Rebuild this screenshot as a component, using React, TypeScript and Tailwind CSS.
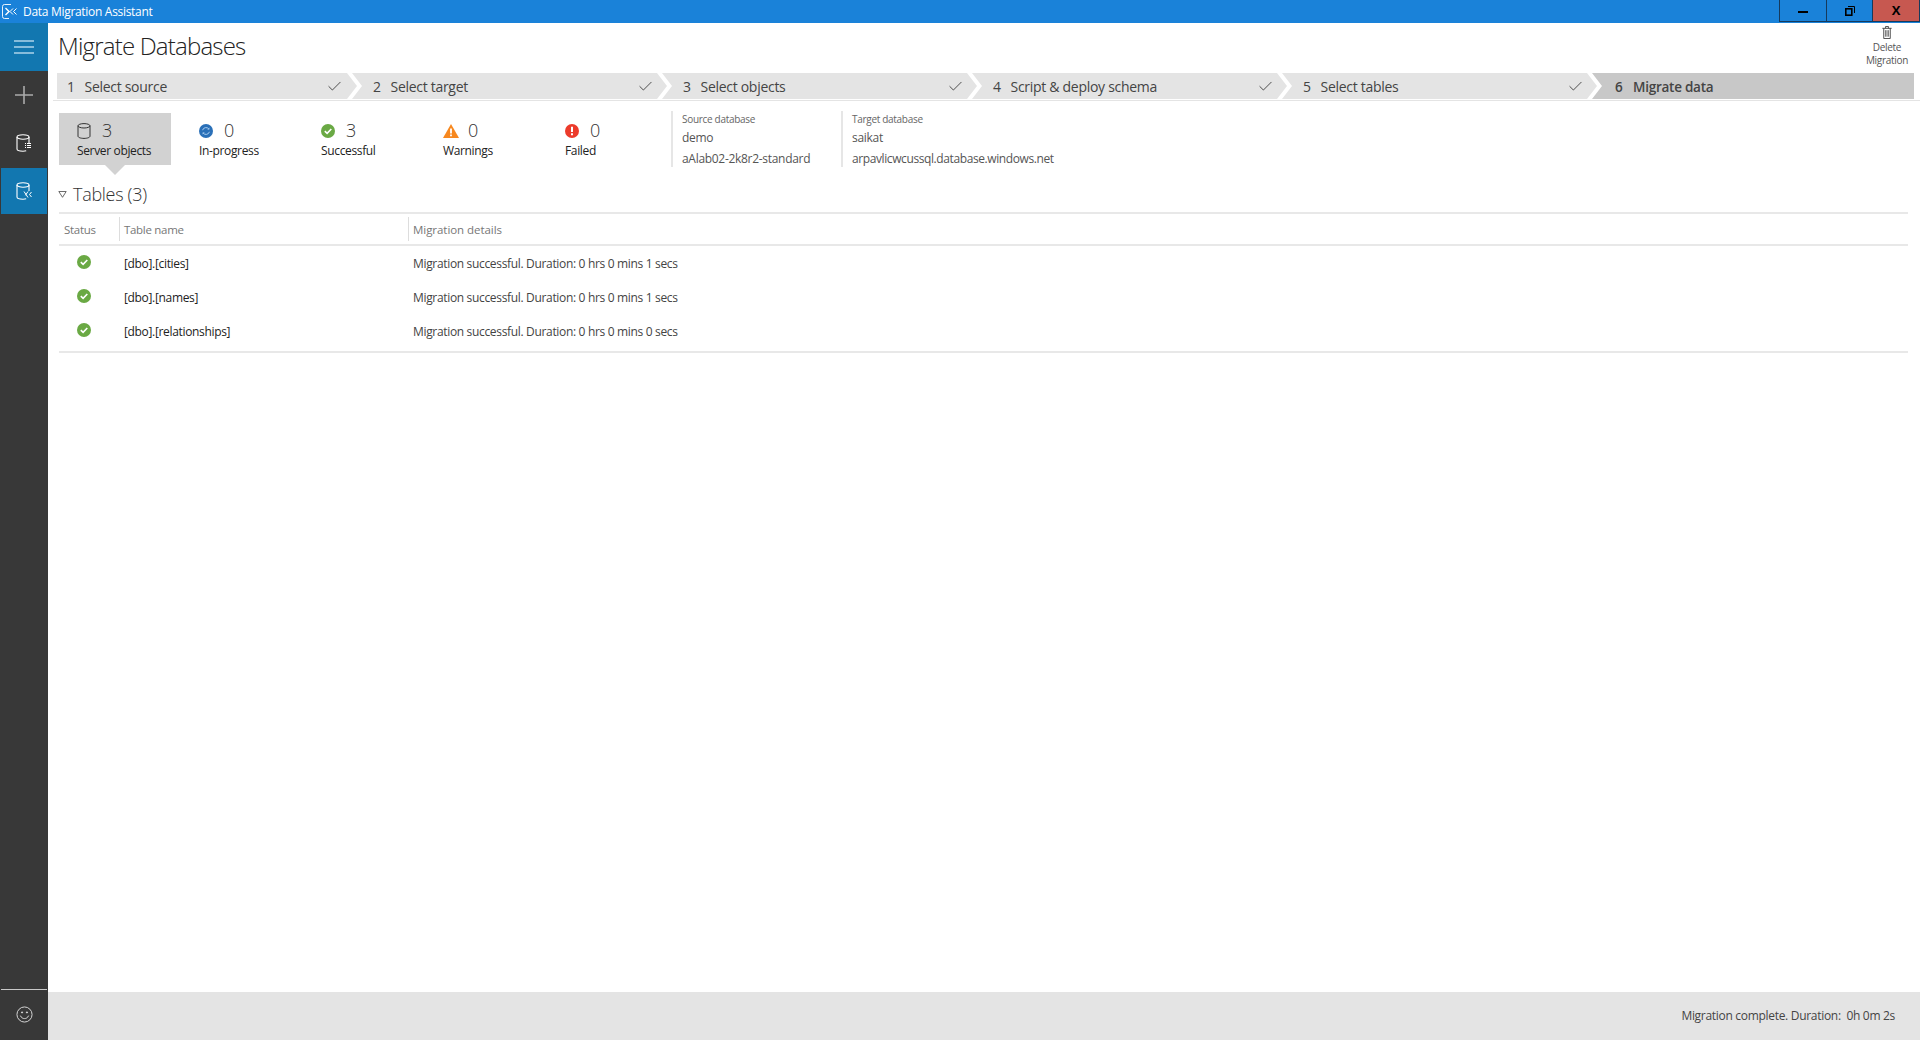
// Data Migration Assistant, "Migrate data" results screen.
import { Check } from 'lucide-react';

const FONT = "font-['Open_Sans','Liberation_Sans',sans-serif]";

const steps = ['Select source', 'Select target', 'Select objects', 'Script & deploy schema', 'Select tables'];

const rows = [
  { name: '[dbo].[cities]', secs: 1 },
  { name: '[dbo].[names]', secs: 1 },
  { name: '[dbo].[relationships]', secs: 0 },
];

function Cylinder({ className = '', children }: { className?: string; children?: React.ReactNode }) {
  return (
    <svg viewBox="0 0 16 18" fill="none" stroke="currentColor" strokeWidth="1.1" className={className}>
      <ellipse cx="7" cy="3" rx="6" ry="2.2" />
      <path d="M1 3v12c0 1.2 2.7 2.2 6 2.2 1.2 0 2.3-.1 3.2-.4M13 3v6" />
      {children}
    </svg>
  );
}

function ServerIcon() {
  return (
    <svg viewBox="0 0 14 16" fill="none" stroke="#333" strokeWidth="1" className="h-[16px] w-[14px]">
      <ellipse cx="7" cy="2.8" rx="6" ry="2.2" />
      <path d="M1 2.8v10.4c0 1.2 2.7 2.2 6 2.2s6-1 6-2.2V2.8" />
    </svg>
  );
}

function SuccessIcon({ className = '' }: { className?: string }) {
  return (
    <svg viewBox="0 0 14 14" className={className}>
      <circle cx="7" cy="7" r="7" fill="#6aa944" />
      <path d="M3.8 7.2 6.1 9.4 10.3 5" fill="none" stroke="#fff" strokeWidth="1.6" />
    </svg>
  );
}

function ProgressIcon() {
  return (
    <svg viewBox="0 0 14 14" className="h-[14px] w-[14px]">
      <circle cx="7" cy="7" r="7" fill="#2a70b8" />
      <path d="M3.6 6.2A3.5 3.5 0 0 1 9.8 5M10.4 7.8A3.5 3.5 0 0 1 4.2 9" fill="none" stroke="#a9cdf0" strokeWidth="1" />
      <path d="M10.4 3.4v2.2H8.2M3.6 10.6V8.4h2.2" fill="#a9cdf0" />
    </svg>
  );
}

function WarningIcon() {
  return (
    <svg viewBox="0 0 16 14" className="h-[14px] w-[16px]">
      <path d="M8 0 16 14H0Z" fill="#f7881f" />
      <path d="M7.1 4.5h1.8v5H7.1zM7.1 10.5h1.8v1.8H7.1z" fill="#fff" />
    </svg>
  );
}

function FailedIcon() {
  return (
    <svg viewBox="0 0 14 14" className="h-[14px] w-[14px]">
      <circle cx="7" cy="7" r="7" fill="#ec3b2b" />
      <path d="M6 2.8h2v5.2H6zM6 9.2h2v2H6z" fill="#fff" />
    </svg>
  );
}

function Stat({ icon, count, label, active }: { icon: React.ReactNode; count: number; label: string; active?: boolean }) {
  return (
    <div className={`relative h-[52px] w-[112px] pl-[18px] pt-[8px] ${active ? 'bg-[#d2d2d2]' : ''}`}>
      <div className="flex h-[19px] items-center">
        <div className="flex w-[25px] items-center">{icon}</div>
        <span className="text-[18px] font-light leading-[19px] text-[#333]">{count}</span>
      </div>
      <div className="mt-[3px] text-[12px] leading-[16px] tracking-[-0.35px] text-[#222]">{label}</div>
      {active && (
        <div className="absolute left-[46px] top-[52px] h-0 w-0 border-x-[10px] border-t-[10px] border-x-transparent border-t-[#d2d2d2]" />
      )}
    </div>
  );
}

function DbInfo({ title, name, server, className, serverClass }: { title: string; name: string; server: string; className: string; serverClass: string }) {
  return (
    <div className={`h-[56px] border-l-2 border-[#e6e6e6] pl-[9px] ${className}`}>
      <div className="mt-[1px] text-[10px] leading-[14px] tracking-[-0.3px] text-[#666]">{title}</div>
      <div className="mt-[4px] text-[12px] leading-[16px] tracking-[-0.3px] text-[#555]">{name}</div>
      <div className={`mt-[5px] text-[12px] leading-[16px] text-[#555] ${serverClass}`}>{server}</div>
    </div>
  );
}

export default function App() {
  return (
    <div className={`flex h-screen w-full flex-col overflow-hidden bg-white ${FONT}`}>
      {/* title bar */}
      <div className="flex h-[23px] shrink-0 items-start justify-between bg-[#1a82d9]">
        <div className="flex h-[23px] items-center pl-[1px] text-white">
          <svg viewBox="0 0 17 17" fill="none" stroke="#fff" className="h-[17px] w-[17px]">
            <path d="M10 1.5H3.5a2 2 0 0 0-2 2v10a2 2 0 0 0 2 2H8" strokeWidth=".9" />
            <path d="M4.5 5 8 8.5 4.5 12" strokeWidth="1.4" />
            <path d="M12 5.5 9 8.5l3 3M15.5 5.5l-3 3 3 3" strokeWidth="1" />
          </svg>
          <span className="ml-[5px] text-[12px] tracking-[-0.3px]">Data Migration Assistant</span>
        </div>
        <div className="flex h-[22px] border border-t-0 border-[#163a5c]">
          <div className="flex w-[46px] items-center justify-center pt-[3px]">
            <div className="h-[2px] w-[10px] bg-black" />
          </div>
          <div className="flex w-[46px] items-center justify-center border-l border-[#163a5c]">
            <svg viewBox="0 0 10 10" fill="none" stroke="#000" className="h-[10px] w-[10px]">
              <rect x="0.8" y="2.8" width="6" height="6.4" strokeWidth="1.6" />
              <path d="M3 .5h6.5V7" strokeWidth="1" />
            </svg>
          </div>
          <div className="flex w-[47px] items-center justify-center border-l border-[#163a5c] bg-[#c75850] text-[13px] font-bold text-black">
            X
          </div>
        </div>
      </div>

      <div className="flex min-h-0 flex-1">
        {/* side rail */}
        <div className="flex w-[48px] shrink-0 flex-col bg-[#383838] text-white">
          <div className="flex h-[48px] items-center justify-center bg-[#1277b0]">
            <div className="flex w-[20px] flex-col gap-[4px]">
              <div className="h-[2px] bg-[#86bcdb]" />
              <div className="h-[2px] bg-[#86bcdb]" />
              <div className="h-[2px] bg-[#86bcdb]" />
            </div>
          </div>
          <div className="flex h-[48px] items-center justify-center">
            <svg viewBox="0 0 20 20" stroke="#aaa" strokeWidth="1.6" className="h-[20px] w-[20px]">
              <path d="M10 1v18M1 10h18" />
            </svg>
          </div>
          <div className="flex h-[48px] items-center justify-center">
            <Cylinder className="h-[18px] w-[16px]">
              <path d="M9 9.5h1M9 11.5h1M9 13.5h1M11 9.5h4M11 11.5h4M11 13.5h4" strokeWidth="1" />
            </Cylinder>
          </div>
          <div className="mx-[1px] mt-[1px] flex h-[46px] items-center justify-center bg-[#1277b0]">
            <Cylinder className="h-[18px] w-[16px]">
              <path d="M8 9.5l4 6M12 9.5l-2.6 3.8M15.5 10l-2 2.5 2 2.5" strokeWidth="1" />
            </Cylinder>
          </div>
          <div className="mt-auto mx-[1px] h-[1px] bg-[#c8c8c8]" />
          <div className="flex h-[50px] items-center justify-center pb-[2px]">
            <svg viewBox="0 0 18 18" fill="none" stroke="#ddd" strokeWidth="1" className="h-[17px] w-[17px]">
              <circle cx="9" cy="9" r="8" />
              <path d="M4.6 10.2c1 2.2 2.6 3.1 4.4 3.1s3.4-.9 4.4-3.1" />
              <circle cx="6.4" cy="6.8" r=".6" fill="#ddd" />
              <circle cx="11.6" cy="6.8" r=".6" fill="#ddd" />
            </svg>
          </div>
        </div>

        {/* main */}
        <div className="flex min-w-0 flex-1 flex-col">
          <div className="flex h-[50px] shrink-0 items-start justify-between pl-[10px] pr-[8px]">
            <h1 className="mt-[8px] text-[24px] font-light leading-[30px] tracking-[-0.8px] text-[#222]">
              Migrate Databases
            </h1>
            <div className="flex w-[50px] flex-col items-center pt-[3px] text-center text-[10px] leading-[13px] tracking-[-0.3px] text-[#555]">
              <svg viewBox="0 0 10 14" fill="none" stroke="#444" className="h-[13px] w-[10px]">
                <path d="M1.5 2.5v11h7v-11M0 2.5h10M3.5 2.5V.5h3v2" strokeWidth="1" />
                <path d="M3.5 4.5v7M5 4.5v7M6.5 4.5v7" strokeWidth=".8" />
              </svg>
              <span className="mt-[2px]">Delete</span>
              <span>Migration</span>
            </div>
          </div>

          {/* wizard steps */}
          <div className="shrink-0 pl-[5px]">
            <div className="flex h-[26px] pl-[4px] pr-[6px]">
              {steps.map((label, i) => (
                <div
                  key={label}
                  className={
                    i === 0
                      ? 'flex w-[300px] shrink-0 items-center justify-between bg-[#e4e4e4] pl-[10px] pr-[14px] [clip-path:polygon(0_0,290px_0,300px_50%,290px_100%,0_100%)]'
                      : '-ml-[5px] flex w-[315px] shrink-0 items-center justify-between bg-[#e4e4e4] pl-[21px] pr-[13px] [clip-path:polygon(0_0,305px_0,315px_50%,305px_100%,0_100%,10px_50%)]'
                  }
                >
                  <div className="flex pt-[1px] text-[14px] tracking-[-0.29px] text-[#444]">
                    <span className="w-[17.5px]">{i + 1}</span>
                    <span>{label}</span>
                  </div>
                  <Check className="h-[17px] w-[17px] text-[#333]" strokeWidth={1.2} />
                </div>
              ))}
              <div className="-ml-[5px] flex min-w-0 flex-1 items-center bg-[#c8c8c8] pl-[23px] pt-[2px] text-[13.5px] font-semibold tracking-[-0.25px] text-[#444] [clip-path:polygon(0_0,100%_0,100%_100%,0_100%,10px_50%)]">
                <span className="w-[18px]">6</span>
                <span>Migrate data</span>
              </div>
            </div>
            <div className="mt-[1px] h-[1px] bg-[#e4e4e4]" />
          </div>

          {/* summary */}
          <div className="flex shrink-0 pl-[11px] pt-[10px]">
            <div className="mt-[2px] flex gap-[10px]">
              <Stat active count={3} label="Server objects" icon={<ServerIcon />} />
              <Stat count={0} label="In-progress" icon={<ProgressIcon />} />
              <Stat count={3} label="Successful" icon={<SuccessIcon className="h-[14px] w-[14px]" />} />
              <Stat count={0} label="Warnings" icon={<WarningIcon />} />
              <Stat count={0} label="Failed" icon={<FailedIcon />} />
            </div>
            <DbInfo className="ml-[12px] w-[170px]" title="Source database" name="demo" server="aAlab02-2k8r2-standard" serverClass="tracking-[-0.3px]" />
            <DbInfo title="Target database" name="saikat" server="arpavlicwcussql.database.windows.net" className="w-[300px]" serverClass="tracking-[-0.4px]" />
          </div>

          {/* tables */}
          <div className="ml-[11px] mr-[12px] mt-[9px]">
            <div className="flex h-[36px] items-center text-[#333]">
              <svg viewBox="0 0 10 8" fill="none" stroke="#555" className="-ml-[1px] h-[7px] w-[9px]">
                <path d="M.8.6h8.4L5 7.2Z" strokeWidth="1" />
              </svg>
              <span className="ml-[6px] text-[18px] font-light tracking-[-0.3px]">Tables (3)</span>
            </div>
            <div className="border-y-2 border-[#e8e8e8]">
              <div className="flex h-[30px] items-center text-[11.5px] tracking-[-0.3px] text-[#777]">
                <div className="w-[60px] pl-[5px] pt-[2px]">Status</div>
                <div className="flex h-[24px] w-[289px] items-center border-l border-[#ddd] pl-[4px] pt-[2px]">Table name</div>
                <div className="flex h-[24px] items-center border-l border-[#ddd] pl-[4px] pt-[2px] tracking-[-0.05px]">Migration details</div>
              </div>
            </div>
            <div className="border-b-2 border-[#e8e8e8] pb-[2px] pt-[1px]">
              {rows.map((r) => (
                <div key={r.name} className="flex h-[34px] items-center text-[12px] tracking-[-0.33px]">
                  <div className="flex w-[60px] justify-center pb-[4px] pl-[6px] pr-[17px]">
                    <SuccessIcon className="h-[14px] w-[14px]" />
                  </div>
                  <div className="w-[290px] pl-[5px] text-[#222]">{r.name}</div>
                  <div className="pl-[4px] text-[#444]">
                    Migration successful. Duration: 0 hrs 0 mins {r.secs} secs
                  </div>
                </div>
              ))}
            </div>
          </div>

          <div className="mt-auto flex h-[48px] shrink-0 items-center justify-end bg-[#e4e4e4] pr-[25px] text-[12px] tracking-[-0.3px] text-[#444]">
            Migration complete. Duration:&nbsp; 0h 0m 2s
          </div>
        </div>
      </div>
    </div>
  );
}
